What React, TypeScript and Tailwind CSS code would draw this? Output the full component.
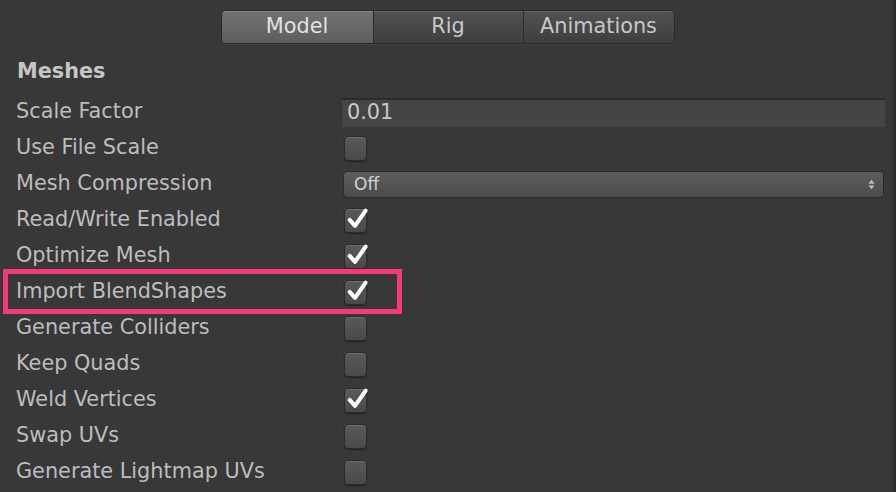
import React from "react";

type Row = {
    label: string;
    kind: "text" | "check" | "select";
    value?: string;
    checked?: boolean;
    highlight?: boolean;
};

const rows: Row[] = [
    { label: "Scale Factor", kind: "text", value: "0.01" },
    { label: "Use File Scale", kind: "check", checked: false },
    { label: "Mesh Compression", kind: "select", value: "Off" },
    { label: "Read/Write Enabled", kind: "check", checked: true },
    { label: "Optimize Mesh", kind: "check", checked: true },
    { label: "Import BlendShapes", kind: "check", checked: true, highlight: true },
    { label: "Generate Colliders", kind: "check", checked: false },
    { label: "Keep Quads", kind: "check", checked: false },
    { label: "Weld Vertices", kind: "check", checked: true },
    { label: "Swap UVs", kind: "check", checked: false },
    { label: "Generate Lightmap UVs", kind: "check", checked: false },
];

const Checkbox = ({ checked }: { checked?: boolean }) => (
    <div className="relative mt-[6px] ml-[2px] w-[23px] h-[25px] rounded-[4px] border border-[#2a2a2a] bg-gradient-to-b from-[#5a5a5a] to-[#494949] shadow-[inset_0_1px_0_rgba(255,255,255,0.12),0_1px_1px_rgba(0,0,0,0.4)]">
        {checked && (
            <svg viewBox="0 0 24 24" className="absolute left-[0px] top-[-3px] w-[25px] h-[25px]">
                <path
                    d="M4.5 13.4 L9.6 19 L19.8 4.4"
                    fill="none"
                    stroke="#ffffff"
                    strokeWidth="3.9"
                    strokeLinecap="round"
                    strokeLinejoin="round"
                />
            </svg>
        )}
    </div>
);

const Control = ({ row }: { row: Row }) => {
    if (row.kind === "text") {
        return (
            <div className="flex items-center w-[543px] h-[29px] bg-[#454545] border-t-2 border-[#2b2b2b] pl-[5px] text-[#c9c9c9]">
                {row.value}
            </div>
        );
    }
    if (row.kind === "select") {
        return (
            <div className="flex items-center justify-between w-[541px] h-[27px] ml-[1px] mt-[1px] rounded-[4px] border border-[#2c2c2c] bg-gradient-to-b from-[#5d5d5d] to-[#4b4b4b] pl-[10px] pr-[8px] text-[17px] text-[#d2d2d2]">
                <span>{row.value}</span>
                <svg viewBox="0 0 8 12" className="w-[7px] h-[11px]">
                    <path d="M4 0.5 L7.5 5 L0.5 5 Z" fill="#bdbdbd" />
                    <path d="M4 11.5 L7.5 7 L0.5 7 Z" fill="#bdbdbd" />
                </svg>
            </div>
        );
    }
    return <Checkbox checked={row.checked} />;
};

const App = () => {
    const tabs = ["Model", "Rig", "Animations"];

    return (
        <div className="w-[896px] h-[492px] overflow-hidden bg-[#383838] border-r-[3px] border-[#2d2d2d] font-['DejaVu_Sans',sans-serif] text-[20.8px] text-[#bdbdbd]">
            {/* Tabs */}
            <div className="flex justify-center pt-[10px] pl-[2px]">
                <div className="flex h-[34px] rounded-[5px] border border-[#2a2a2a] overflow-hidden shadow-[0_1px_0_rgba(255,255,255,0.05)]">
                    {tabs.map((tab, index) => (
                        <div
                            key={tab}
                            className={
                                index === 0
                                    ? "flex items-center justify-center w-[151px] bg-gradient-to-b from-[#727272] to-[#5e5e5e] text-[#e2e2e2] shadow-[inset_0_1px_0_rgba(255,255,255,0.15)]"
                                    : index === 1
                                    ? "flex items-center justify-center w-[150px] border-l border-[#2e2e2e] bg-gradient-to-b from-[#525252] to-[#3e3e3e] text-[#c8c8c8] shadow-[inset_0_1px_0_rgba(255,255,255,0.1)]"
                                    : "flex items-center justify-center w-[151px] border-l border-[#2e2e2e] bg-gradient-to-b from-[#525252] to-[#3e3e3e] text-[#c8c8c8] shadow-[inset_0_1px_0_rgba(255,255,255,0.1)]"
                            }
                        >
                            {tab}
                        </div>
                    ))}
                </div>
            </div>

            {/* Section header */}
            <div className="flex items-center h-[36px] mt-[10px] pl-[17px] font-bold text-[#c6c6c6]">Meshes</div>

            {/* Rows */}
            <div className="mt-[4px]">
                {rows.map((row) => (
                    <div key={row.label} className="relative flex items-start h-[36px]">
                        <div className="flex items-center h-[36px] w-[342px] pl-[16px] shrink-0">{row.label}</div>
                        <div className={row.kind === "check" ? "" : "flex items-center h-[36px]"}>
                            <Control row={row} />
                        </div>
                        {row.highlight && (
                            <span className="absolute left-[3px] top-[-5px] w-[399px] h-[45px] border-[5px] border-[#f43a7c] pointer-events-none" />
                        )}
                    </div>
                ))}
            </div>
        </div>
    );
};

export default App;
